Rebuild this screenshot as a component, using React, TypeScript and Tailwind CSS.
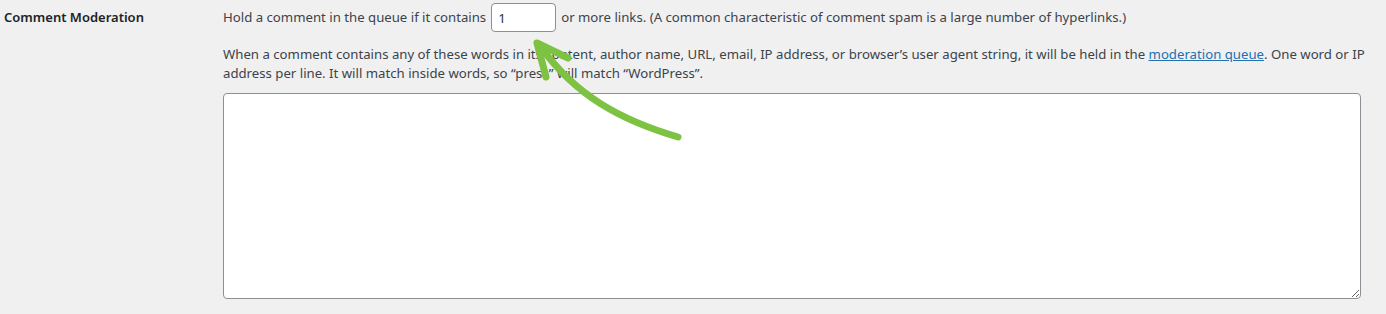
export default function App() {
  return (
    <div
      className="relative w-[1386px] h-[314px] bg-[#f0f0f1] text-[#3c434a] text-[13.2px] overflow-hidden"
      style={{ fontFamily: '"Noto Sans", "Open Sans", sans-serif' }}
    >
      <div className="flex pt-[3px]">
        <div className="w-[223px] pl-[4px] pt-[5px] text-[13px] font-semibold text-[#1d2327]">
          Comment Moderation
        </div>
        <div className="flex flex-col w-[1138px]">
          <div className="flex items-center h-[29px]">
            <span>Hold a comment in the queue if it contains</span>
            <input
              className="mx-[5px] w-[65px] h-[29px] bg-white border border-[#8c8f94] rounded-[4px] px-[6px] text-[#2c3338] outline-none"
              defaultValue="1"
            />
            <span>
              or more links. (A common characteristic of comment spam is a large number of hyperlinks.)
            </span>
          </div>
          <p className="mt-[13px] leading-[19px] text-[#3c434a]">
            <span className="block whitespace-nowrap">
              When a comment contains any of these words in its content, author name, URL, email, IP address, or
              browser’s user agent string, it will be held in the{" "}
              <a className="text-[#2271b1] underline">moderation queue</a>. One word or IP
            </span>
            <span className="block whitespace-nowrap">
              address per line. It will match inside words, so “press” will match “WordPress”.
            </span>
          </p>
          <textarea className="mt-[10px] w-[1138px] h-[206px] bg-white border border-[#8c8f94] rounded-[4px] outline-none" />
        </div>
      </div>
      <svg
        className="absolute left-0 top-0 pointer-events-none"
        width="1386"
        height="314"
        viewBox="0 0 1386 314"
        fill="none"
        stroke="#7dc242"
        strokeWidth="7"
        strokeLinecap="round"
        strokeLinejoin="round"
      >
        <path d="M678 137 C620 120 575 95 541 47" />
        <path d="M546 77 L537 43 L568 58" />
      </svg>
    </div>
  );
}
